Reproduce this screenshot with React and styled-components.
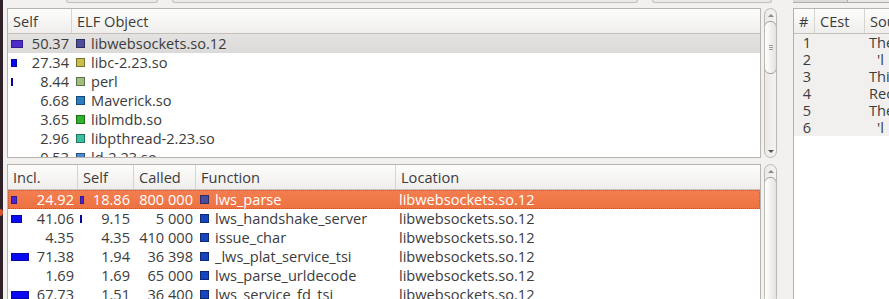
import React from 'react';
import styled, { createGlobalStyle } from 'styled-components';

const Global = createGlobalStyle`
  html, body { margin: 0; padding: 0; background: #f2f1f0; }
  body {
    font-family: "Open Sans", "Noto Sans", "DejaVu Sans", sans-serif;
    font-size: 14.6px;
    color: #3c3c3c;
  }
  * { box-sizing: border-box; }
`;

const Window = styled.div`
  width: 889px;
  height: 299px;
  overflow: hidden;
  display: flex;
  background: #f2f1f0;
`;

const DarkEdge = styled.div`
  width: 3px;
  flex: none;
  background: #2e2127;
  display: flex;
  flex-direction: column;
  padding-top: 209px;
`;

const Dot = styled.div`
  width: 3px;
  height: 7px;
  background: #d9552f;
  border-radius: 0 3px 3px 0;
`;

const MainColumn = styled.div`
  width: 774px;
  flex: none;
  padding-left: 4px;
  display: flex;
  flex-direction: column;
`;

const TabStrip = styled.div`
  height: 8px;
  flex: none;
  display: flex;
  align-items: flex-start;
`;

const TabEdge = styled.div`
  height: 3px;
  margin-left: ${(p) => p.$offset}px;
  width: ${(p) => p.$width}px;
  border-bottom: 1px solid #c2bfba;
  border-left: 1px solid #c2bfba;
  border-right: 1px solid #c2bfba;
  border-radius: 0 0 3px 3px;
  background: #ebe9e6;
  flex: none;
`;

const PaneRow = styled.div`
  display: flex;
  gap: 3px;
  height: ${(p) => p.$height}px;
  flex: none;
`;

const Splitter = styled.div`
  height: 6px;
  flex: none;
`;

const ListFrame = styled.div`
  width: 754px;
  height: 100%;
  border: 1px solid #b7b4af;
  background: #ffffff;
  overflow: hidden;
  display: flex;
  flex-direction: column;
`;

const Header = styled.div`
  display: grid;
  grid-template-columns: ${(p) => p.$cols};
  height: 25px;
  flex: none;
  border-bottom: 1px solid #c4c1bc;
  background: linear-gradient(#fdfdfc, #efeeec);
`;

const HeaderCell = styled.div`
  padding-left: 5px;
  line-height: 24px;
  white-space: nowrap;
  overflow: hidden;
  color: #3c3c3c;
  border-right: ${(p) => (p.$last ? 'none' : '1px solid #d8d5d0')};
`;

const Row = styled.div`
  display: grid;
  grid-template-columns: ${(p) => p.$cols};
  height: ${(p) => p.$h || 19}px;
  line-height: ${(p) => p.$h || 19}px;
  flex: none;
  align-items: center;
  white-space: nowrap;
  color: ${(p) => (p.$sel === 'active' ? '#ffffff' : '#3c3c3c')};
  background: ${(p) =>
    p.$sel === 'active'
      ? 'linear-gradient(#f37e4f, #ee7242)'
      : p.$sel === 'inactive'
      ? 'linear-gradient(#e4e3e1, #dbdad8)'
      : 'transparent'};
  outline: ${(p) => (p.$sel === 'active' ? '1px dotted rgba(120,60,30,0.45)' : 'none')};
  outline-offset: -1px;
`;

const BarCell = styled.div`
  display: flex;
  align-items: center;
  justify-content: space-between;
  padding: 0 ${(p) => p.$pr}px 0 ${(p) => p.$pl}px;
  overflow: hidden;
`;

const Bar = styled.div`
  height: 8px;
  width: ${(p) => p.$w}px;
  background: ${(p) => p.$color};
  border: 1px solid rgba(0, 0, 30, 0.35);
  flex: none;
  visibility: ${(p) => (p.$w > 0 ? 'visible' : 'hidden')};
`;

const Num = styled.span`
  text-align: right;
`;

const NumCell = styled.div`
  text-align: right;
  padding-right: ${(p) => p.$pr || 3}px;
`;

const IconCell = styled.div`
  display: flex;
  align-items: center;
  gap: 6px;
  padding-left: 4px;
  overflow: hidden;
`;

const Swatch = styled.span`
  width: 9px;
  height: 9px;
  flex: none;
  background: ${(p) => p.$color};
  border: 1px solid rgba(0, 0, 0, 0.4);
`;

const TextCell = styled.div`
  padding-left: ${(p) => p.$pl || 3}px;
  overflow: hidden;
`;

/* Scrollbar */
const Scrollbar = styled.div`
  width: 13px;
  height: 100%;
  flex: none;
  border: 1px solid #bcb9b4;
  border-radius: 7px;
  background: linear-gradient(90deg, #ebeae8, #f3f2f1);
  display: flex;
  flex-direction: column;
  overflow: hidden;
`;

const ArrowBtn = styled.div`
  height: 12px;
  flex: none;
  display: flex;
  align-items: center;
  justify-content: center;
`;

const Tri = styled.span`
  width: 0;
  height: 0;
  border-left: 3px solid transparent;
  border-right: 3px solid transparent;
  ${(p) =>
    p.$dir === 'up'
      ? 'border-bottom: 3px solid #8d8a86;'
      : 'border-top: 3px solid #5a5855;'}
`;

const Thumb = styled.div`
  height: ${(p) => p.$h}px;
  flex: none;
  margin: 0 -1px;
  border: 1px solid #a3a19d;
  border-radius: 6px;
  background: linear-gradient(90deg, #ffffff, #e4e2df);
  display: flex;
  align-items: center;
  justify-content: center;
`;

const Grip = styled.div`
  width: 4px;
  height: 5px;
  border-top: 1px solid #9f9c98;
  border-bottom: 1px solid #9f9c98;
  display: flex;
  align-items: center;
  &::after {
    content: '';
    width: 4px;
    height: 1px;
    background: #9f9c98;
  }
`;

const Trough = styled.div`
  flex: 1;
`;

/* Right side */
const RightArea = styled.div`
  flex: none;
  width: 112px;
  margin-left: 16px;
  display: flex;
  flex-direction: column;
`;

const RightTabs = styled.div`
  height: 8px;
  flex: none;
  display: flex;
  align-items: flex-start;
`;

const RightTab = styled.div`
  height: 3px;
  width: ${(p) => p.$width}px;
  flex: none;
  background: ${(p) => p.$bg};
  border-bottom: 1px solid #b0ada8;
  border-right: 1px solid #b0ada8;
`;

const RightFrame = styled.div`
  flex: 1;
  border-left: 1px solid #b3b0ab;
  border-top: 1px solid #b7b4af;
  background: #ffffff;
  display: flex;
  flex-direction: column;
  overflow: hidden;
`;

const RowsBlock = styled.div`
  background: #f1f0ef;
  display: flex;
  flex-direction: column;
`;

const topCols = '64px 1fr';
const botCols = '70px 56px 62px 200px 1fr';
const rightCols = '21px 50px 1fr';

const PURPLE = '#4d2cc9';
const BLUE = '#0a0af2';

const elfRows = [
  { w: 12, c: PURPLE, v: '50.37', sw: '#4d4d9c', name: 'libwebsockets.so.12', sel: 'inactive' },
  { w: 6, c: BLUE, v: '27.34', sw: '#c6bf4c', name: 'libc-2.23.so' },
  { w: 2, c: BLUE, v: '8.44', sw: '#a0be7e', name: 'perl' },
  { w: 0, c: BLUE, v: '6.68', sw: '#2b7cc0', name: 'Maverick.so' },
  { w: 0, c: BLUE, v: '3.65', sw: '#2cb52c', name: 'liblmdb.so' },
  { w: 0, c: BLUE, v: '2.96', sw: '#3bbf9f', name: 'libpthread-2.23.so' },
  { w: 0, c: BLUE, v: '0.53', sw: '#4a8ccc', name: 'ld-2.23.so' },
];

const fnRows = [
  { iw: 6, ic: '#4a28cf', i: '24.92', sw2: 4, sc: '#4a28cf', s: '18.86', called: '800 000', fn: 'lws_parse', sw: '#4b4b9e', sel: 'active' },
  { iw: 11, ic: BLUE, i: '41.06', sw2: 2, sc: BLUE, s: '9.15', called: '5 000', fn: 'lws_handshake_server', sw: '#1745bd' },
  { iw: 0, ic: BLUE, i: '4.35', sw2: 0, sc: BLUE, s: '4.35', called: '410 000', fn: 'issue_char', sw: '#1745bd' },
  { iw: 18, ic: BLUE, i: '71.38', sw2: 0, sc: BLUE, s: '1.94', called: '36 398', fn: '_lws_plat_service_tsi', sw: '#1745bd' },
  { iw: 0, ic: BLUE, i: '1.69', sw2: 0, sc: BLUE, s: '1.69', called: '65 000', fn: 'lws_parse_urldecode', sw: '#1745bd' },
  { iw: 18, ic: BLUE, i: '67.73', sw2: 0, sc: BLUE, s: '1.51', called: '36 400', fn: 'lws_service_fd_tsi', sw: '#1745bd' },
];

const srcRows = [
  { n: '1', t: 'The', ind: false },
  { n: '2', t: "'l", ind: true },
  { n: '3', t: 'Thi', ind: false },
  { n: '4', t: 'Rec', ind: false },
  { n: '5', t: 'The', ind: false },
  { n: '6', t: "'l", ind: true },
];

export default function App() {
  return (
    <>
      <Global />
      <Window>
        <DarkEdge>
          <Dot />
        </DarkEdge>
        <MainColumn>
          <TabStrip>
            <TabEdge $offset={59} $width={92} />
            <TabEdge $offset={14} $width={466} />
            <TabEdge $offset={14} $width={120} />
          </TabStrip>
          <PaneRow $height={150}>
            <ListFrame>
              <Header $cols={topCols}>
                <HeaderCell>Self</HeaderCell>
                <HeaderCell $last>ELF Object</HeaderCell>
              </Header>
              {elfRows.map((r) => (
                <Row key={r.name} $cols={topCols} $sel={r.sel}>
                  <BarCell $pl={3} $pr={3}>
                    <Bar $w={r.w} $color={r.c} />
                    <Num>{r.v}</Num>
                  </BarCell>
                  <IconCell>
                    <Swatch $color={r.sw} />
                    <span>{r.name}</span>
                  </IconCell>
                </Row>
              ))}
            </ListFrame>
            <Scrollbar>
              <ArrowBtn>
                <Tri $dir="up" />
              </ArrowBtn>
              <Thumb $h={53}>
                <Grip />
              </Thumb>
              <Trough />
              <ArrowBtn>
                <Tri $dir="down" />
              </ArrowBtn>
            </Scrollbar>
          </PaneRow>
          <Splitter />
          <PaneRow $height={140}>
            <ListFrame>
              <Header $cols={botCols}>
                <HeaderCell>Incl.</HeaderCell>
                <HeaderCell>Self</HeaderCell>
                <HeaderCell>Called</HeaderCell>
                <HeaderCell>Function</HeaderCell>
                <HeaderCell $last>Location</HeaderCell>
              </Header>
              {fnRows.map((r) => (
                <Row key={r.fn} $cols={botCols} $sel={r.sel}>
                  <BarCell $pl={3} $pr={4}>
                    <Bar $w={r.iw} $color={r.ic} />
                    <Num>{r.i}</Num>
                  </BarCell>
                  <BarCell $pl={2} $pr={4}>
                    <Bar $w={r.sw2} $color={r.sc} />
                    <Num>{r.s}</Num>
                  </BarCell>
                  <NumCell>{r.called}</NumCell>
                  <IconCell>
                    <Swatch $color={r.sw} />
                    <span>{r.fn}</span>
                  </IconCell>
                  <TextCell>libwebsockets.so.12</TextCell>
                </Row>
              ))}
            </ListFrame>
            <Scrollbar>
              <ArrowBtn>
                <Tri $dir="up" />
              </ArrowBtn>
              <Thumb $h={200} />
            </Scrollbar>
          </PaneRow>
        </MainColumn>
        <RightArea>
          <RightTabs>
            <RightTab $width={55} $bg="#dcdad7" />
            <RightTab $width={60} $bg="#e9e7e4" />
          </RightTabs>
          <RightFrame>
            <Header $cols={rightCols}>
              <HeaderCell>#</HeaderCell>
              <HeaderCell>CEst</HeaderCell>
              <HeaderCell $last>Sou</HeaderCell>
            </Header>
            <RowsBlock>
              {srcRows.map((r) => (
                <Row key={r.n} $cols={rightCols} $h={17}>
                  <NumCell $pr={4}>{r.n}</NumCell>
                  <div />
                  <TextCell $pl={r.ind ? 12 : 4}>{r.t}</TextCell>
                </Row>
              ))}
            </RowsBlock>
          </RightFrame>
        </RightArea>
      </Window>
    </>
  );
}
